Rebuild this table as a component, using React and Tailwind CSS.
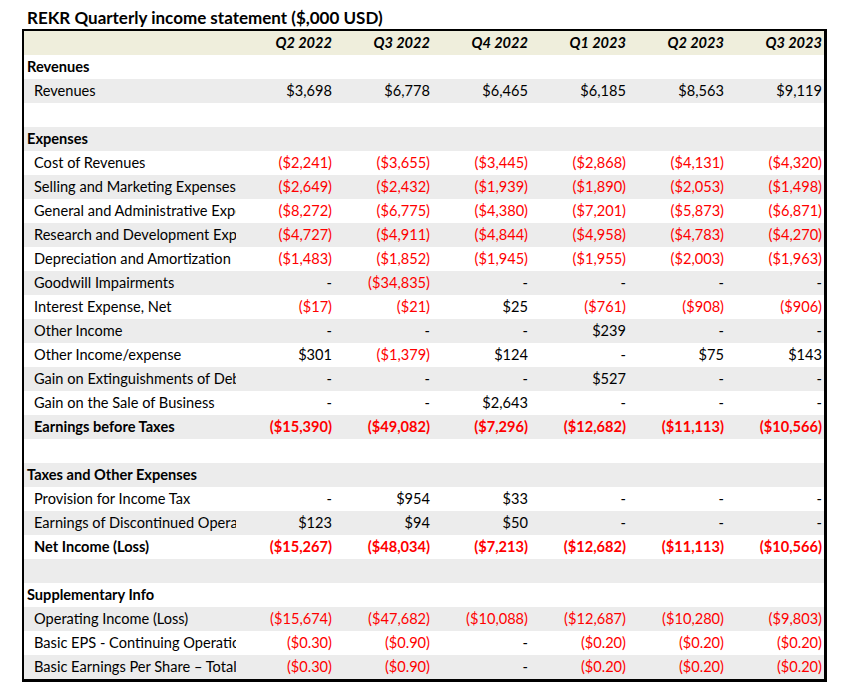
import React from "react";

const cols = ["Q2 2022", "Q3 2022", "Q4 2022", "Q1 2023", "Q2 2023", "Q3 2023"];

const rows = [
  { type: "section", label: "Revenues" },
  { label: "Revenues", v: ["$3,698", "$6,778", "$6,465", "$6,185", "$8,563", "$9,119"] },
  { type: "blank" },
  { type: "section", label: "Expenses" },
  { label: "Cost of Revenues", v: ["($2,241)", "($3,655)", "($3,445)", "($2,868)", "($4,131)", "($4,320)"] },
  { label: "Selling and Marketing Expenses", v: ["($2,649)", "($2,432)", "($1,939)", "($1,890)", "($2,053)", "($1,498)"] },
  { label: "General and Administrative Expenses", v: ["($8,272)", "($6,775)", "($4,380)", "($7,201)", "($5,873)", "($6,871)"] },
  { label: "Research and Development Expenses", v: ["($4,727)", "($4,911)", "($4,844)", "($4,958)", "($4,783)", "($4,270)"] },
  { label: "Depreciation and Amortization", v: ["($1,483)", "($1,852)", "($1,945)", "($1,955)", "($2,003)", "($1,963)"] },
  { label: "Goodwill Impairments", v: ["-", "($34,835)", "-", "-", "-", "-"] },
  { label: "Interest Expense, Net", v: ["($17)", "($21)", "$25", "($761)", "($908)", "($906)"] },
  { label: "Other Income", v: ["-", "-", "-", "$239", "-", "-"] },
  { label: "Other Income/expense", v: ["$301", "($1,379)", "$124", "-", "$75", "$143"] },
  { label: "Gain on Extinguishments of Debt", v: ["-", "-", "-", "$527", "-", "-"] },
  { label: "Gain on the Sale of Business", v: ["-", "-", "$2,643", "-", "-", "-"] },
  { type: "total", label: "Earnings before Taxes", v: ["($15,390)", "($49,082)", "($7,296)", "($12,682)", "($11,113)", "($10,566)"] },
  { type: "blank" },
  { type: "section", label: "Taxes and Other Expenses" },
  { label: "Provision for Income Tax", v: ["-", "$954", "$33", "-", "-", "-"] },
  { label: "Earnings of Discontinued Operations", v: ["$123", "$94", "$50", "-", "-", "-"] },
  { type: "total", label: "Net Income (Loss)", v: ["($15,267)", "($48,034)", "($7,213)", "($12,682)", "($11,113)", "($10,566)"] },
  { type: "blank" },
  { type: "section", label: "Supplementary Info" },
  { label: "Operating Income (Loss)", v: ["($15,674)", "($47,682)", "($10,088)", "($12,687)", "($10,280)", "($9,803)"] },
  { label: "Basic EPS - Continuing Operations", v: ["($0.30)", "($0.90)", "-", "($0.20)", "($0.20)", "($0.20)"] },
  { label: "Basic Earnings Per Share \u2013 Total", v: ["($0.30)", "($0.90)", "-", "($0.20)", "($0.20)", "($0.20)"] },
];

const grid = "grid grid-cols-[212px_repeat(6,98px)] h-[24px] items-center";

function Row({ r, i }) {
  const bg = i % 2 === 1 ? "bg-[#ececec]" : "bg-white";
  if (r.type === "blank") return <div className={`${grid} ${bg}`} />;
  if (r.type === "section")
    return (
      <div className={`${grid} ${bg}`}>
        <div className="pl-[3px] font-bold whitespace-nowrap">{r.label}</div>
      </div>
    );
  const bold = r.type === "total";
  return (
    <div className={`${grid} ${bg}`}>
      <div className={`pl-[10px] whitespace-nowrap overflow-hidden ${bold ? "font-bold" : ""}`}>{r.label}</div>
      {r.v.map((x, j) => (
        <div
          key={j}
          className={`text-right pr-[2px] whitespace-nowrap ${x.startsWith("(") ? "text-[#ff0000]" : "text-black"} ${bold ? "font-bold" : ""}`}
        >
          {x}
        </div>
      ))}
    </div>
  );
}

export default function App() {
  return (
    <div className="w-[845px] h-[693px] bg-white text-black pt-[6px] pl-[27px]" style={{ fontFamily: "Lato, 'Open Sans', sans-serif" }}>
      <div className="text-[17px] font-bold leading-[24px] h-[23px]">REKR Quarterly income statement ($,000 USD)</div>
      <div className="ml-[-5px] w-[805px] border-l-2 border-t-2 border-r-[3px] border-b-[3px] border-black text-[14.6px] leading-[24px]">
        <div className={`${grid} bg-[#efeedc]`}>
          <div />
          {cols.map((c) => (
            <div key={c} className="text-right pr-[2px] font-bold italic">{c}</div>
          ))}
        </div>
        {rows.map((r, i) => (
          <Row key={i} r={r} i={i} />
        ))}
      </div>
    </div>
  );
}
